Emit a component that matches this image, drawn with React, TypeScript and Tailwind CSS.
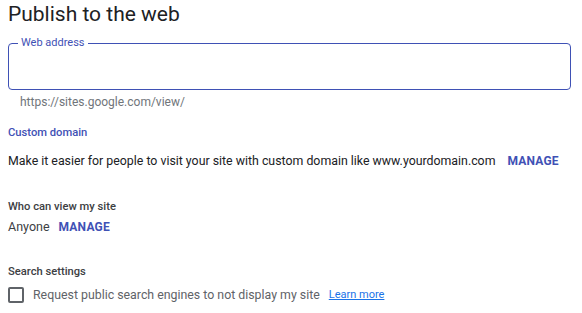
import React from 'react';

export default function App() {
  return (
    <div className="w-[582px] h-[313px] bg-white overflow-hidden font-['Roboto',sans-serif] text-[#202124]">
      <div className="pl-2 pr-[11px]">
        <h1 className="pt-[1px] text-[21px] leading-[26px] text-[#202124]">Publish to the web</h1>

        <div className="relative mt-[16px] h-[47px] rounded-[4px] border border-[#3f51b5]">
          <span className="absolute -top-[8px] left-[9px] bg-white px-[3px] text-[11px] leading-[14px] text-[#3f51b5]">
            Web address
          </span>
        </div>
        <div className="pl-3 pt-[5px] text-[12px] leading-[14px] text-[#70757a]">https://sites.google.com/view/</div>

        <div className="mt-[17px] text-[11.2px] leading-[14px] font-medium text-[#3f51b5]">Custom domain</div>
        <div className="mt-[13px] flex items-center whitespace-nowrap text-[12.35px] leading-[16px]">
          <span className="shrink-0">Make it easier for people to visit your site with custom domain like www.yourdomain.com</span>
          <span className="ml-[12px] shrink-0 text-[12px] font-bold tracking-[0.2px] text-[#3f51b5]">MANAGE</span>
        </div>

        <div className="mt-[31px] text-[11.2px] leading-[14px] font-medium text-[#3c4043]">Who can view my site</div>
        <div className="mt-[5px] flex items-center text-[12.5px] leading-[16px] text-[#3c4043]">
          <span>Anyone</span>
          <span className="ml-[9px] text-[12px] font-bold tracking-[0.2px] text-[#3f51b5]">MANAGE</span>
        </div>

        <div className="mt-[30px] text-[11.2px] leading-[14px] font-medium text-[#3c4043]">Search settings</div>
        <div className="mt-[8px] flex items-center whitespace-nowrap">
          <div className="w-[16px] h-[16px] shrink-0 rounded-[2px] border-[2px] border-[#5f6368]" />
          <span className="ml-[9px] text-[12.35px] leading-[16px] text-[#5f6368]">Request public search engines to not display my site</span>
          <span className="ml-[9px] text-[11px] leading-[16px] text-[#1a73e8] underline">Learn more</span>
        </div>
      </div>
    </div>
  );
}
